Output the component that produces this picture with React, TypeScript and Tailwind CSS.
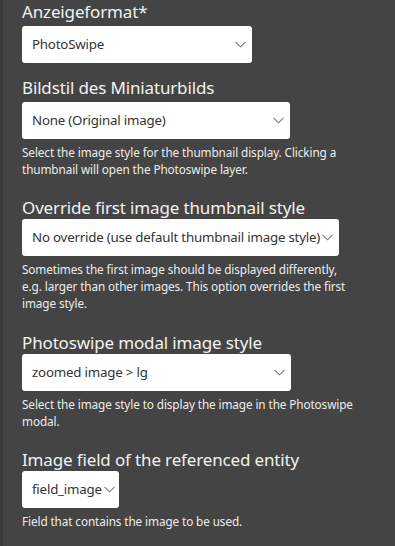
type Field = {
  label: string;
  value: string;
  width: string;
  help?: string;
  helpWidth?: string;
  gap: string;
  labelGap: string;
};

const fields: Field[] = [
  { label: "Anzeigeformat*", value: "PhotoSwipe", width: "w-[230px]", gap: "mt-[1px]", labelGap: "mb-[3px]" },
  {
    label: "Bildstil des Miniaturbilds",
    value: "None (Original image)",
    width: "w-[268px]",
    help: "Select the image style for the thumbnail display. Clicking a thumbnail will open the Photoswipe layer.",
    gap: "mt-[14px]",
    labelGap: "mb-[3px]",
  },
  {
    label: "Override first image thumbnail style",
    value: "No override (use default thumbnail image style)",
    width: "w-[317px]",
    help: "Sometimes the first image should be displayed differently, e.g. larger than other images. This option overrides the first image style.",
    helpWidth: "max-w-[336px]",
    gap: "mt-[19px]",
    labelGap: "mb-0",
  },
  {
    label: "Photoswipe modal image style",
    value: "zoomed image > lg",
    width: "w-[269px]",
    help: "Select the image style to display the image in the Photoswipe modal.",
    gap: "mt-[20px]",
    labelGap: "mb-0",
  },
  {
    label: "Image field of the referenced entity",
    value: "field_image",
    width: "w-[97px]",
    help: "Field that contains the image to be used.",
    gap: "mt-[19px]",
    labelGap: "mb-0",
  },
];

function SelectBox({ value, width }: { value: string; width: string }) {
  return (
    <div
      className={`${width} h-[37px] bg-white rounded-[3px] flex items-center justify-between pl-[10px] pr-[6px] text-[13.3px] text-[#333] tracking-[-0.2px]`}
    >
      <span className="whitespace-nowrap">{value}</span>
      <svg width="11" height="7" viewBox="0 0 11 7" className="shrink-0 ml-[2px]">
        <polyline points="0.5,0.8 5.5,5.8 10.5,0.8" fill="none" stroke="#7a7a7a" strokeWidth="1.1" />
      </svg>
    </div>
  );
}

export default function App() {
  return (
    <div className="w-[395px] h-[546px] bg-[#444444] flex font-['Noto_Sans',sans-serif] overflow-hidden">
      <div className="w-[3px] bg-[#3a3a3a] shrink-0" />
      <div className="pl-[19px] pr-[18px] flex flex-col">
        {fields.map((f) => (
          <div key={f.label} className={f.gap}>
            <div className={`text-[17px] leading-[22px] text-[#f2f2f2] tracking-[-0.15px] ${f.labelGap}`}>{f.label}</div>
            <SelectBox value={f.value} width={f.width} />
            {f.help && (
              <p className={`mt-[5px] text-[11.75px] leading-[17px] text-[#ececec] tracking-[-0.1px] ${f.helpWidth ?? ""}`}>
                {f.help}
              </p>
            )}
          </div>
        ))}
      </div>
    </div>
  );
}
